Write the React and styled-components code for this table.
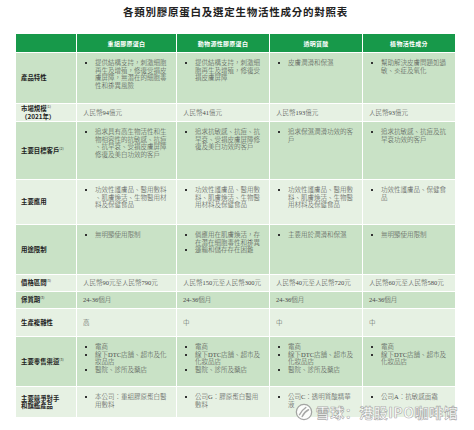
import React from 'react';
import styled, { createGlobalStyle } from 'styled-components';

const Global = createGlobalStyle`
  html, body { margin: 0; padding: 0; background: #fff; }
  body { width: 474px; height: 430px; overflow: hidden; }
`;

const COLS = '60px 99px 92px 92px 92px';

const Page = styled.div`
  position: relative;
  width: 474px;
  height: 430px;
  padding: 0 19px 0 16px;
  box-sizing: border-box;
  font-family: "Noto Sans CJK TC", "Noto Sans", sans-serif;
`;

const Title = styled.h1`
  margin: 0;
  height: 34px;
  padding-top: 4px;
  box-sizing: border-box;
  text-align: center;
  font-size: 10.5px;
  line-height: 16px;
  letter-spacing: 0.75px;
  font-weight: 700;
  color: #222;
`;

const Table = styled.div`
  display: flex;
  flex-direction: column;
  gap: 1px;
  background: #fff;
`;

const Row = styled.div`
  display: grid;
  grid-template-columns: ${COLS};
  column-gap: 1px;
  height: ${(p) => p.$h}px;
`;

const tones = {
  head: '#17994a',
  dark: '#c9e2c6',
  light: '#e6f1e3',
};

const HeadCell = styled.div`
  background: ${tones.head};
  color: #fff;
  font-size: 6px;
  font-weight: 700;
  display: flex;
  align-items: center;
  justify-content: center;
  letter-spacing: 0.3px;
`;

const Label = styled.div`
  background: ${(p) => tones[p.$tone]};
  display: flex;
  align-items: center;
  padding-left: 5px;
  font-size: 6.4px;
  line-height: 7.5px;
  font-weight: 700;
  color: #1e1e1e;
`;

const Cell = styled.div`
  background: ${(p) => tones[p.$tone]};
  display: flex;
  align-items: ${(p) => (p.$top ? 'flex-start' : 'center')};
  padding: ${(p) => (p.$top ? '6px 8px 0 8px' : '0 6px')};
  box-sizing: border-box;
  font-family: "Liberation Serif", "Noto Sans CJK TC", serif;
  font-size: 6.5px;
  line-height: 7.5px;
  font-weight: 300;
  color: #4a4a4a;
  min-width: 0;
`;

const List = styled.ul`
  margin: 0;
  padding: 0;
  list-style: none;
  width: 100%;
`;

const Item = styled.li`
  display: flex;
  align-items: flex-start;
  line-break: anywhere;
`;

const Dot = styled.span`
  flex: none;
  width: 2px;
  height: 2px;
  margin: 3px 8px 0 0;
  background: #333;
`;

const Sup = styled.sup`
  font-size: 3.5px;
  line-height: 0;
  vertical-align: 3px;
  font-weight: 400;
`;

const Watermark = styled.div`
  position: absolute;
  right: 16px;
  bottom: 8px;
  display: flex;
  align-items: center;
  gap: 3px;
  font-family: "Noto Sans CJK SC", "Noto Sans", sans-serif;
  font-size: 14px;
  font-weight: 700;
  color: rgba(255, 255, 255, 0.85);
  -webkit-text-stroke: 0.6px rgba(130, 130, 130, 0.7);
  letter-spacing: 0.5px;
`;

const Logo = () => (
  <svg width="18" height="18" viewBox="0 0 20 20">
    <circle cx="10" cy="10" r="8.5" fill="rgba(255,255,255,0.85)" stroke="rgba(130,130,130,0.7)" strokeWidth="1.4" />
    <path d="M5 13 C7 9, 9 7, 12 5" fill="none" stroke="rgba(130,130,130,0.7)" strokeWidth="1.6" strokeLinecap="round" />
    <path d="M8 15 C10 11, 12 9, 15 7.5" fill="none" stroke="rgba(130,130,130,0.7)" strokeWidth="1.6" strokeLinecap="round" />
  </svg>
);

const heads = ['重組膠原蛋白', '動物源性膠原蛋白', '透明質酸', '植物活性成分'];

const retail3 = ['電商', '線下DTC店舗、超市及化妝品店', '醫院、診所及藥店'];
const apps = ['功效性護膚品、醫用敷料、肌膚煥活、生物醫用材料及保健食品'];

const rows = [
  {
    h: 50, tone: 'dark', label: '產品特性', top: true,
    cells: [
      ['提供結構支持，刺激細胞再生及增殖，修復受損皮膚屏障，無潛在的細胞毒性和排異風險'],
      ['提供結構支持，刺激細胞再生及增殖，修復受損皮膚屏障'],
      ['皮膚潤滑和保濕'],
      ['幫助解決皮膚問題如過敏、炎症及氧化'],
    ],
  },
  {
    h: 17, tone: 'light',
    label: <span>市場規模<Sup>(1)</Sup><br />（2021年）</span>,
    cells: ['人民幣94億元', '人民幣41億元', '人民幣193億元', '人民幣93億元'],
  },
  {
    h: 57, tone: 'dark', label: <span>主要目標客戶<Sup>(2)</Sup></span>, top: true,
    cells: [
      ['追求具有高生物活性和生物相容性的抗敏感、抗痘、抗早衰、受損皮膚屏障修復及美白功效的客戶'],
      ['追求抗敏感、抗痘、抗早衰、受損皮膚屏障修復及美白功效的客戶'],
      ['追求保濕潤滑功效的客戶'],
      ['追求抗敏感、抗痘及抗早衰功效的客戶'],
    ],
  },
  {
    h: 44, tone: 'light', label: '主要應用', top: true,
    cells: [apps, apps, apps, ['功效性護膚品、保健食品']],
  },
  {
    h: 49, tone: 'dark', label: '用途限制', top: true,
    cells: [
      ['無明顯使用限制'],
      ['倘應用在肌膚煥活，存在潛在細胞毒性和排異', '運輸和儲存存在困難'],
      ['主要用於潤滑和保濕'],
      ['無明顯使用限制'],
    ],
  },
  {
    h: 16, tone: 'light', label: <span>價格區間<Sup>(3)</Sup></span>,
    cells: ['人民幣90元至人民幣790元', '人民幣150元至人民幣300元', '人民幣40元至人民幣720元', '人民幣60元至人民幣580元'],
  },
  {
    h: 16, tone: 'dark', label: <span>保質期<Sup>(3)</Sup></span>,
    cells: ['24-36個月', '24-36個月', '24-36個月', '24-36個月'],
  },
  {
    h: 27, tone: 'light', label: '生產複雜性',
    cells: ['高', '中', '中', '中'],
  },
  {
    h: 49, tone: 'dark', label: <span>主要零售渠道<Sup>(3)</Sup></span>, top: true,
    cells: [retail3, retail3, retail3, ['電商', '線下DTC店舗、超市及化妝品店']],
  },
  {
    h: 30, tone: 'light', label: <span>主要競爭對手<br />和旗艦產品</span>, top: true,
    cells: [
      ['本公司：重組膠原蛋白醫用敷料'],
      ['公司G：膠原蛋白醫用敷料'],
      ['公司C：透明質酸精華液'],
      ['公司A：抗敏感面霜'],
    ],
  },
];

export default function App() {
  return (
    <Page>
      <Global />
      <Title>各類別膠原蛋白及選定生物活性成分的對照表</Title>
      <Table>
        <Row $h={18}>
          <HeadCell />
          {heads.map((h) => <HeadCell key={h}>{h}</HeadCell>)}
        </Row>
        {rows.map((r, i) => (
          <Row key={i} $h={r.h}>
            <Label $tone={r.tone}>{r.label}</Label>
            {r.cells.map((c, j) => (
              <Cell key={j} $tone={r.tone} $top={r.top}>
                {Array.isArray(c) ? (
                  <List>
                    {c.map((t, k) => (
                      <Item key={k}><Dot />{t}</Item>
                    ))}
                  </List>
                ) : c}
              </Cell>
            ))}
          </Row>
        ))}
      </Table>
      <Watermark>
        <Logo />
        <span>雪球：港股IPO咖啡馆</span>
      </Watermark>
    </Page>
  );
}
